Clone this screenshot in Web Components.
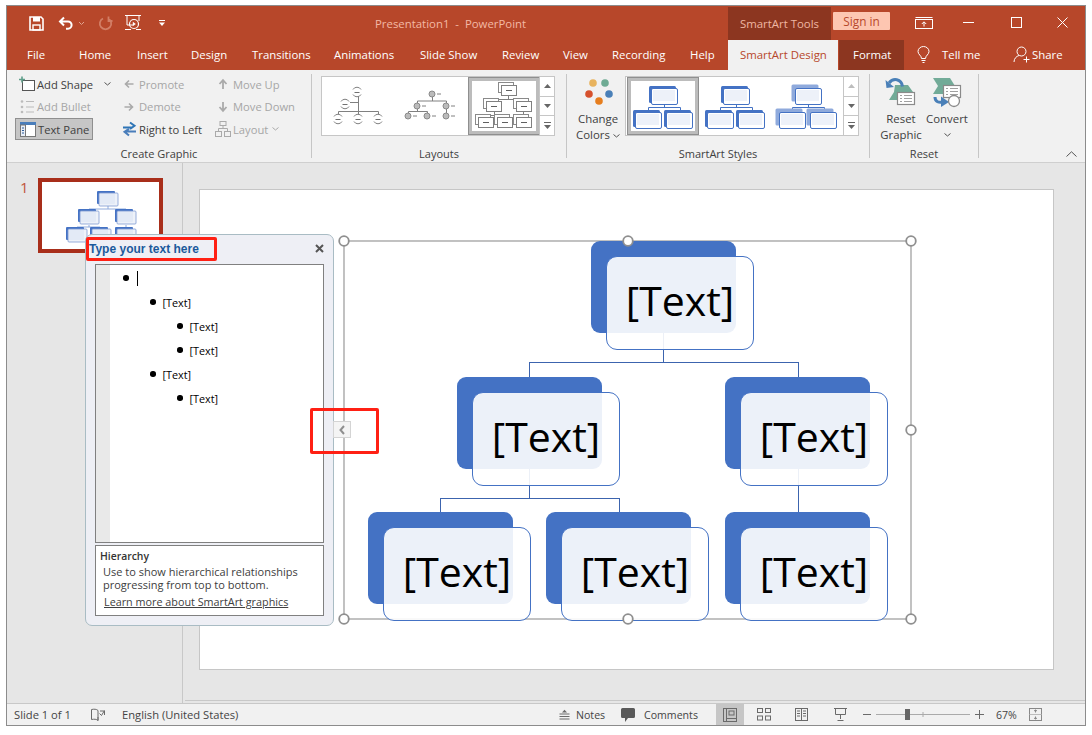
<!DOCTYPE html>
<html lang="en">
<head>
<meta charset="utf-8">
<title>PowerPoint SmartArt</title>
<style>
  html, body { margin: 0; background: #fff; }
  body { font-family: "Open Sans", "Liberation Sans", sans-serif; }
</style>
</head>
<body>
<ppt-window>
  <ppt-titlebar></ppt-titlebar>
  <ppt-tabs></ppt-tabs>
  <ppt-ribbon>
    <ribbon-group label="Create Graphic" w="305">
      <div style="display:flex;padding-left:8px;width:297px;box-sizing:border-box">
        <div style="width:102px">
          <rb-item icon="addShape" chev="1" w="96">Add Shape</rb-item>
          <rb-item icon="addBullet" disabled>Add Bullet</rb-item>
          <rb-item icon="textPane" active w="78">Text Pane</rb-item>
        </div>
        <div style="width:94px">
          <rb-item icon="promote" disabled>Promote</rb-item>
          <rb-item icon="demote" disabled>Demote</rb-item>
          <rb-item icon="rtl">Right to Left</rb-item>
        </div>
        <div>
          <rb-item icon="moveUp" disabled>Move Up</rb-item>
          <rb-item icon="moveDown" disabled>Move Down</rb-item>
          <rb-item icon="layout" disabled chev="1">Layout</rb-item>
        </div>
      </div>
    </ribbon-group>
    <ribbon-group label="Layouts" w="255" pad="9">
      <rb-gallery kind="layouts"></rb-gallery>
    </ribbon-group>
    <ribbon-group label="SmartArt Styles" w="303">
      <div style="display:flex">
        <rb-big icon="colors" w="54" left="4" chev="1">Change<br>Colors</rb-big>
        <rb-gallery kind="styles"></rb-gallery>
      </div>
    </ribbon-group>
    <ribbon-group label="Reset" w="109" pad="8">
      <div style="display:flex">
        <rb-big icon="reset" w="46">Reset<br>Graphic</rb-big>
        <rb-big icon="convert" w="46" chev="2">Convert</rb-big>
      </div>
    </ribbon-group>
    <ribbon-collapse></ribbon-collapse>
  </ppt-ribbon>
  <ppt-stage>
    <smart-node x="591" y="241">[Text]</smart-node>
    <smart-node x="457" y="377">[Text]</smart-node>
    <smart-node x="725" y="377">[Text]</smart-node>
    <smart-node x="368" y="512">[Text]</smart-node>
    <smart-node x="546" y="512">[Text]</smart-node>
    <smart-node x="725" y="512">[Text]</smart-node>
    <text-pane></text-pane>
  </ppt-stage>
  <ppt-statusbar></ppt-statusbar>
</ppt-window>

<script>
// shared ribbon text style
const UI_FONT = '"Open Sans", "Liberation Sans", sans-serif';
const svg = (w, h, body, css = '') =>
    `<svg width="${w}" height="${h}" viewBox="0 0 ${w} ${h}" overflow="visible" style="display:block;flex:none;${css}">${body}</svg>`;

// white doc with grey lines, used by reset and convert
const docLines = (x, y) => `<rect x="${x + .5}" y="${y + .5}" width="17" height="12" fill="#fff" stroke="#8a8a8a" stroke-width="1.2"/>
    <path d="M${x + 3} ${y + 3.5}h2M${x + 7} ${y + 3.5}h8M${x + 3} ${y + 6.5}h2M${x + 7} ${y + 6.5}h8M${x + 3} ${y + 9.5}h2M${x + 7} ${y + 9.5}h8" stroke="#a0a0a0"/>`;

const ICONS = {
    addShape: svg(16, 16, `<rect x="3.5" y="4.5" width="12" height="10" fill="#fff" stroke="#555"/><path d="M3 .5v6M0 3.5h6" stroke="#5E9E8A" stroke-width="1.6"/>`),
    addBullet: svg(16, 16, `<g fill="#bbb"><circle cx="3" cy="2.5" r="1.3"/><circle cx="3" cy="8" r="1.3"/><circle cx="3" cy="13" r="1.3"/></g><path d="M7 2.5h8M7 8h8M7 13h8" stroke="#bbb"/>`),
    textPane: svg(16, 15, `<rect x=".5" y=".5" width="15" height="14" fill="#fff" stroke="#777"/><rect x="0" y="0" width="16" height="3" fill="#4A7EBB"/><rect x=".5" y="3" width="5" height="11.5" fill="#E8EEF7" stroke="#777"/><path d="M2 6h2M2 8.5h2M2 11h2" stroke="#2F5C99"/>`),
    promote: svg(12, 12, `<path d="M10.5 6H3M6 2.5 2.5 6 6 9.5" fill="none" stroke="#aaa" stroke-width="1.6"/>`),
    demote: svg(12, 12, `<path d="M1.5 6H9M6 2.5 9.5 6 6 9.5" fill="none" stroke="#aaa" stroke-width="1.6"/>`),
    rtl: svg(15, 16, `<path d="M1 6.5h9.5M8 1.5l4.5 3.2L8 8" fill="none" stroke="#2E75B6" stroke-width="2"/><path d="M14 10.5H4M7 7.8l-4.5 3L7 14.5" fill="none" stroke="#4A7EBB" stroke-width="2"/>`),
    moveUp: svg(12, 12, `<path d="M6 11V3M2.5 6 6 2.2 9.5 6" fill="none" stroke="#aaa" stroke-width="1.8"/>`),
    moveDown: svg(12, 12, `<path d="M6 1v8M2.5 6 6 9.8 9.5 6" fill="none" stroke="#aaa" stroke-width="1.8"/>`),
    layout: svg(16, 16, `<g fill="none" stroke="#aaa"><rect x="5" y=".5" width="6" height="4"/><rect x=".5" y="10.5" width="6" height="5"/><rect x="9.5" y="10.5" width="6" height="5"/><path d="M8 4.5v3M3.5 10.5v-3h9v3"/></g>`),
    colors: svg(28, 28, `<circle cx="9" cy="5" r="3.8" fill="#E8B35E"/><circle cx="21" cy="5" r="3.8" fill="#6FAB94"/><circle cx="5" cy="16" r="3.8" fill="#D6512D"/><circle cx="25" cy="16" r="3.8" fill="#4A80B8"/><circle cx="15" cy="23" r="3.8" fill="#E67E1E"/>`),
    reset: svg(32, 31, `<g transform="translate(-885 -78)">
        <path d="M895 85h13l5 7-5 8h-19l5-8z" fill="#72AB98"/>
        ${docLines(897, 92)}
        <path d="M902.500 86.500C901.500 78.500 893 77.500 889 83" fill="none" stroke="#4A80B8" stroke-width="3"/>
        <path d="M885.500 80l1 8 7.500-1z" fill="#4A80B8"/>
    </g>`),
    convert: svg(32, 31, `<g transform="translate(-931 -78)">
        <path d="M933 78h17l5 8-5 8h-17l5-8z" fill="#72AB98"/>
        ${docLines(943, 85)}
        <path d="M935 97c0 5 4 6 8 5" fill="none" stroke="#4A80B8" stroke-width="3"/>
        <path d="M941 96.500l8 5.500-8 5z" fill="#4A80B8"/>
        <circle cx="954" cy="101" r="5.500" fill="#fff" stroke="#8a8a8a" stroke-width="1.300"/>
    </g>`)
};

// draws the two-layer node thumbnails of the galleries
function miniNode(x, y, w, h, back, line, inner, off = 2) {
    return `<rect x="${x - off}" y="${y - off}" width="${w}" height="${h}" rx="1.5" fill="${back}"/>
        <rect x="${x + .5}" y="${y + .5}" width="${w - 1}" height="${h - 1}" rx="1.5" fill="#fff" stroke="${line}" stroke-width="1"/>
        <rect x="${x + 2}" y="${y + 2}" width="${w - 5}" height="${h - 6}" fill="${inner}"/>`;
}
function layoutCircle(x, y) {
    return `<circle cx="${x}" cy="${y}" r="4.500" fill="#fff"/><path d="M${x - 4} ${y - 2.5}a4.500 4.200 0 0 1 8 0M${x - 4} ${y + 2.5}a4.500 4.200 0 0 0 8 0" fill="none" stroke="#808080"/><path d="M${x - 2.5} ${y + .5}h5" stroke="#707070"/>`;
}
function dot(x, y) {
    return `<circle cx="${x}" cy="${y}" r="3" fill="#bbb" stroke="#8a8a8a"/><path d="M${x + 5} ${y}h4" stroke="#808080"/>`;
}
function greyBox(x, y) {
    return `<rect x="${x - 2.5}" y="${y - 2.5}" width="15" height="10" fill="#fff" stroke="#8a8a8a"/><rect x="${x + .5}" y="${y + .5}" width="15" height="10" fill="#fff" stroke="#808080"/><path d="M${x + 5} ${y + 5.5}h6" stroke="#606060"/>`;
}

class PptWindow extends HTMLElement {
    constructor() {
        super();
        this.attachShadow({ mode: 'open' }).innerHTML = `
            <style>
                :host { display: flex; flex-direction: column; box-sizing: border-box; width: 1080px; height: 721px; margin: 5px 0 0 6px;
                        border: 1px solid #8c8c8c; background: #f1f1f1; font-family: ${UI_FONT}; overflow: hidden; }
            </style>
            <slot></slot>`;
    }
}

class PptTitlebar extends HTMLElement {
    constructor() {
        super();
        this.attachShadow({ mode: 'open' }).innerHTML = `
            <style>
                :host { display: flex; height: 34px; background: #b7472a; color: #fff; font-size: 11.4px; align-items: stretch; }
                .qat { width: 368px; display: flex; align-items: center; box-sizing: border-box; padding-left: 22px; }
                .title { width: 353px; display: flex; align-items: center; color: #f3b9a5; white-space: pre; }
                .tools { width: 103px; margin-top: 1px; background: #8c3620; color: #efb7a3; display: flex; align-items: center; justify-content: center; }
                .sign { width: 57px; height: 18px; margin: 6px 0 0 2px; background: #fdc6b1; color: #b7472a; display: flex; align-items: center; justify-content: center; font-size: 11.8px; border-radius: 1px; }
                .ctl { width: 46px; display: flex; align-items: center; justify-content: center; }
                .ctl svg { margin-top: -1px; }
            </style>
            <div class="qat">
                ${svg(15, 15, `<path d="M1 1h11l2 2v11H1z" fill="none" stroke="#fff" stroke-width="1.6"/><rect x="4" y="1" width="7" height="4.5" fill="#fff"/><rect x="4" y="9" width="7" height="5" fill="none" stroke="#fff" stroke-width="1.4"/>`)}
                ${svg(16, 14, `<path d="M2.500 5.500H10a3.600 3.600 0 0 1 0 7.200H8M6 1.500 2 5.500l4 4" fill="none" stroke="#fff" stroke-width="2"/>`, 'margin-left:14px')}
                ${svg(7, 5, `<path d="M1 1l2.500 2.500L6 1" fill="none" stroke="#e0a491"/>`, 'margin-left:4px')}
                ${svg(14, 14, `<path d="M4 2.500a5.700 5.700 0 1 0 5 0M9.500 .5v4.500h4" fill="none" stroke="#d27e66" stroke-width="1.800"/>`, 'margin-left:14px')}
                ${svg(18, 18, `<path d="M1 1.500h16M3 2v9h6M15 2v5M7 15.500H1M17 15.500h-5" fill="none" stroke="#fff"/><circle cx="10" cy="10" r="4.500" fill="none" stroke="#fff" stroke-width="1.200"/><path d="M8.800 7.800l3 2.200-3 2.200z" fill="#fff"/>`, 'margin-left:11px')}
                ${svg(6, 7, `<path d="M0 .5h6" stroke="#fff"/><path d="M0 2.500h6L3 6z" fill="#fff"/>`, 'margin-left:17px')}
            </div>
            <div class="title">Presentation1  -  PowerPoint</div>
            <div class="tools">SmartArt Tools</div>
            <div class="sign">Sign in</div>
            <div style="width:11px"></div>
            <div class="ctl">${svg(18, 12, `<rect x=".5" y="2.500" width="17" height="9" fill="none" stroke="#fff"/><path d="M.5 .5h17" stroke="#fff"/><path d="M9 9.500V5M6.800 7 9 4.800 11.200 7" fill="none" stroke="#fff"/>`)}</div>
            <div class="ctl" style="margin-left:-2px">${svg(11, 1, `<path d="M0 .5h11" stroke="#fff"/>`)}</div>
            <div class="ctl" style="margin-left:2px">${svg(11, 11, `<rect x=".5" y=".5" width="10" height="10" fill="none" stroke="#fff"/>`)}</div>
            <div class="ctl">${svg(11, 11, `<path d="M.5 .5l10 10M10.500 .5l-10 10" stroke="#fff"/>`)}</div>`;
    }
}

class PptTabs extends HTMLElement {
    constructor() {
        super();
        const tabs = [['File', 72, 20], ['Home', 58], ['Insert', 54], ['Design', 61], ['Transitions', 82], ['Animations', 86],
            ['Slide Show', 82], ['Review', 61], ['View', 49], ['Recording', 78], ['Help', 38]];
        const cell = ([t, w, p = 0], c = '') => `<div class="tab ${c}" style="width:${w}px;padding-left:${p}px"><span>${t}</span></div>`;
        this.attachShadow({ mode: 'open' }).innerHTML = `
            <style>
                :host { display: flex; height: 30px; background: #b7472a; color: #fff; font-size: 11.4px; }
                .tab { box-sizing: border-box; display: flex; align-items: center; white-space: nowrap; padding-bottom: 2px; }
                .on { background: #f1f1f1; color: #b7472a; }
                .ctx { background: #8c3620; margin-left: 1px; }
                .tell { display: flex; align-items: center; margin-left: 13px; width: 96px; padding-bottom: 2px; }
                .share { display: flex; align-items: center; padding-bottom: 2px; }
            </style>
            ${tabs.map(t => cell(t)).join('')}
            ${cell(['SmartArt Design', 110, 12], 'on')}
            ${cell(['Format', 65, 14], 'ctx')}
            <div class="tell">
                ${svg(13, 17, `<path d="M4.500 12.500C4.500 9.500 1 8.500 1 5.500a5.500 5 0 0 1 11 0c0 3-3.500 4-3.500 7zM4.500 14.500h4M5.500 16.500h2" fill="none" stroke="#fff"/>`)}
                <span style="margin-left:12px">Tell me</span>
            </div>
            <div class="share">
                ${svg(17, 17, `<circle cx="8.500" cy="5.500" r="4.500" fill="none" stroke="#fff"/><path d="M1 16c0-3.500 2.500-5.800 5-6.500M13.500 10.500v6M10.500 13.500h6" fill="none" stroke="#fff"/>`)}
                <span style="margin-left:2px">Share</span>
            </div>`;
    }
}

class PptRibbon extends HTMLElement {
    constructor() {
        super();
        this.attachShadow({ mode: 'open' }).innerHTML = `
            <style>
                :host { display: flex; height: 93px; box-sizing: border-box; background: #f1f1f1; border-bottom: 1px solid #cfcfcf; font-size: 11.2px; color: #404040; }
            </style>
            <slot></slot>`;
    }
}

class RibbonGroup extends HTMLElement {
    constructor() {
        super();
        const w = this.getAttribute('w');
        const pad = this.getAttribute('pad') || 0;
        this.attachShadow({ mode: 'open' }).innerHTML = `
            <style>
                :host { display: flex; flex: none; width: ${w}px; height: 92px; }
                .body { flex: 1; min-width: 0; display: flex; flex-direction: column; }
                .content { height: 74px; padding: 3px 0 0 ${pad}px; box-sizing: border-box; }
                .label { text-align: center; line-height: 16px; margin-top: 2px; font-size: 11px; color: #404040; }
                .sep { width: 1px; height: 84px; margin-top: 4px; background: #c6c6c6; }
            </style>
            <div class="body">
                <div class="content"><slot></slot></div>
                <div class="label">${this.getAttribute('label')}</div>
            </div>
            <div class="sep"></div>`;
    }
}

// small ribbon command, one row of a three-row column
class RbItem extends HTMLElement {
    constructor() {
        super();
        const off = this.hasAttribute('disabled');
        const active = this.hasAttribute('active');
        const w = this.getAttribute('w');
        const chev = this.getAttribute('chev');
        this.attachShadow({ mode: 'open' }).innerHTML = `
            <style>
                :host { display: block; height: 22.5px; color: ${off ? '#a6a6a6' : '#404040'}; }
                .row { display: flex; align-items: center; height: 22px; white-space: nowrap; box-sizing: border-box; ${w ? `width:${w}px;` : ''} padding-left: 3px; }
                .active { background: #c6c6c6; border: 1px solid #8f8f8f; }
                .ic { width: 18px; display: flex; align-items: center; justify-content: center; flex: none; margin-right: 1px; }
            </style>
            <div class="row ${active ? 'active' : ''}">
                <span class="ic">${ICONS[this.getAttribute('icon')]}</span>
                <span><slot></slot></span>
                ${chev ? svg(7, 4, `<path d="M.5 .5 3.500 3 6.500 .5" fill="none" stroke="${off ? '#aaa' : '#555'}"/>`, 'margin-left:' + (off ? '4px' : 'auto')) : ''}
            </div>`;
    }
}

class RbBig extends HTMLElement {
    constructor() {
        super();
        const chev = this.getAttribute('chev');
        const mark = svg(7, 4, `<path d="M.5 .5 3.500 3 6.500 .5" fill="none" stroke="#555"/>`);
        this.attachShadow({ mode: 'open' }).innerHTML = `
            <style>
                :host { display: block; width: ${this.getAttribute('w')}px; margin-left: ${this.getAttribute('left') || 0}px; flex: none; text-align: center; line-height: 16px; color: #404040; font-size: 11.4px; }
                .ic { display: flex; justify-content: center; height: 33px; padding-top: 5px; }
                .txt { display: inline-block; }
                .inl { display: inline-block; vertical-align: middle; margin-left: 3px; }
                .under { display: flex; justify-content: center; margin-top: 6px; }
            </style>
            <div class="ic">${ICONS[this.getAttribute('icon')]}</div>
            <div class="txt"><slot></slot>${chev === '1' ? `<span class="inl">${mark}</span>` : ''}</div>
            ${chev === '2' ? `<div class="under">${mark}</div>` : ''}`;
    }
}

class RbGallery extends HTMLElement {
    constructor() {
        super();
        const layouts = this.getAttribute('kind') === 'layouts';
        const first = svg(74, 56, `<g transform="translate(-322 -78)">
                <path d="M358.500 96v19M338.500 114.500v-3h40v3M350 102.500h8.500" fill="none" stroke="#808080"/>
                ${[[357, 92], [345, 104], [338, 119], [358, 119], [378, 119]].map(p => layoutCircle(...p)).join('')}
            </g>`);
        const second = svg(72, 56, `<g transform="translate(-396 -78)">
                <path d="M432.500 97v4M417.500 103v-2h29v2M417.500 109v2.500M408.500 113v-1.500h19v1.500M446.500 109v4" fill="none" stroke="#808080"/>
                ${dot(432, 94)}${dot(417, 106)}${dot(446, 106)}${dot(408, 116)}${dot(427, 116)}${dot(446, 116)}
            </g>`);
        const third = svg(64, 48, `<g transform="translate(-472 -82)">
                <path d="M508.500 95v4.500M494.500 99.500h29M494.500 99v2M523.500 99v2M494.500 111v4.500M485.500 115.500h20M485.500 115v2M505.500 115v2M523.500 111v6" fill="none" stroke="#808080"/>
                ${greyBox(501, 85)}${greyBox(486, 101)}${greyBox(516, 101)}${greyBox(478, 117)}${greyBox(497, 117)}${greyBox(516, 117)}
            </g>`);
        // style thumbnails: same tree in three looks
        const tree = (ox, back, line, off) => {
            const b = [[ox + 24, 88], [ox + 8, 112], [ox + 39, 112]];
            return `<path d="M${ox + 37.5} 104v3M${ox + 21.5} 111v-3.500h32v3.500" fill="none" stroke="${line}"/>` +
                b.map(([x, y]) => miniNode(x, y, 27, 17, back, line, '#edf1f9', off)).join('');
        };
        const sA = svg(64, 48, `<g transform="translate(-631 -82)">${tree(627, '#4472c4', '#4472c4')}</g>`);
        const sB = svg(72, 56, `<g transform="translate(-699 -78)">${tree(699, '#4472c4', '#4472c4')}</g>`);
        const sC = svg(72, 56, `<g transform="translate(-771 -78)">${tree(771, '#8faadc', '#4472c4', 3.5)}</g>`);
        const arrow = (d, c) => `<path d="${d}" fill="${c}"/>`;
        const scroll = (dim) => `
            <div class="scroll">
                <div>${svg(7, 4, arrow('M3.500 0 7 4H0z', dim ? '#bdbdbd' : '#666'))}</div>
                <div>${svg(7, 4, arrow('M0 0h7L3.500 4z', '#666'))}</div>
                <div>${svg(7, 7, `<path d="M0 .5h7" stroke="#666"/>` + arrow('M0 3h7L3.500 7z', '#666'))}</div>
            </div>`;
        this.attachShadow({ mode: 'open' }).innerHTML = `
            <style>
                :host { display: flex; flex: none; width: 234px; height: 60px; margin-top: 3px; box-sizing: border-box; background: #fff; border: 1px solid #c6c6c6; }
                .cell { width: 72px; height: 58px; box-sizing: border-box; display: flex; align-items: center; justify-content: center; flex: none; }
                .sel { border: 4px solid #bcbcbc; outline: 1px solid #8f8f8f; outline-offset: -1px; }
                .items { flex: 1; display: flex; padding: 0 0 0 ${layouts ? 0 : 1}px; overflow: hidden; }
                .scroll { width: 14px; flex: none; border-left: 1px solid #c6c6c6; display: flex; flex-direction: column; }
                .scroll div { flex: 1; display: flex; align-items: center; justify-content: center; border-bottom: 1px solid #c6c6c6; }
                .scroll div:last-child { border-bottom: 0; }
            </style>
            <div class="items">
                ${layouts
                    ? `<div class="cell" style="width:74px">${first}</div><div class="cell">${second}</div><div class="cell sel">${third}</div>`
                    : `<div class="cell sel">${sA}</div><div class="cell">${sB}</div><div class="cell">${sC}</div>`}
            </div>
            ${scroll(!layouts)}`;
    }
}

class RibbonCollapse extends HTMLElement {
    constructor() {
        super();
        this.attachShadow({ mode: 'open' }).innerHTML = `
            <style>:host { flex: 1; display: flex; justify-content: flex-end; align-items: flex-end; padding: 0 8px 5px 0; }</style>
            ${svg(11, 6, `<path d="M.5 5.500 5.500 .8l5 4.700" fill="none" stroke="#555"/>`)}`;
    }
}

// workspace: thumbnail pane on the left, slide canvas on the right
class PptStage extends HTMLElement {
    constructor() {
        super();
        const handles = [[344, 241], [628, 241], [911, 241], [911, 430], [911, 619], [628, 619], [344, 619]];
        const thumbNodes = [[97, 191], [78, 209], [115, 209], [66, 227], [90, 227], [115, 227]];
        this.attachShadow({ mode: 'open' }).innerHTML = `
            <style>
                :host { display: flex; position: relative; height: 540px; background: #e6e6e6; flex: none; }
                .thumbs { width: 176px; flex: none; border-right: 1px solid #c8c8c8; box-sizing: border-box; display: flex; padding: 15px 0 0 13px; }
                .num { width: 18px; color: #c0553c; font-size: 15px; line-height: 18px; }
                .thumb { width: 125px; height: 75px; box-sizing: border-box; border: 4px solid #a82e1a; background: #fff; flex: none; }
                .main { flex: 1; display: flex; flex-direction: column; }
                .slideArea { flex: 1; padding: 26px 0 0 16px; }
                .slide { width: 855px; height: 481px; box-sizing: border-box; background: #fff; border: 1px solid #c6c6c6; }
                .hbar { height: 2px; margin-left: 2px; border-top: 1px solid #c8c8c8; }
                .overlay { position: absolute; left: 0; top: 0; pointer-events: none; }
                .mark { position: absolute; box-sizing: border-box; border: 3px solid #ff2014; border-radius: 2px; z-index: 6; }
                .chev { position: absolute; left: 326px; top: 258px; width: 18px; height: 17px; box-sizing: border-box; background: #f4f4f4; border: 1px solid #d4d4d4; display: flex; align-items: center; justify-content: center; z-index: 5; }
            </style>
            <div class="thumbs">
                <div class="num">1</div>
                <div class="thumb">
                    ${svg(117, 67, `<g transform="translate(-42 -182)">
                        <path d="M108 206v3M89 212v-3h37v3M89 225v2M77 229v-2h23v2M126 225v2" fill="none" stroke="#8faadc"/>
                        ${thumbNodes.map(([x, y]) => `<rect x="${x}" y="${y}" width="18" height="13" rx="1" fill="#4472c4"/><rect x="${x + 2}" y="${y + 2}" width="19" height="13" rx="1" fill="#edf1f9" fill-opacity=".94" stroke="#7d9ad2" stroke-width=".8"/>`).join('')}
                    </g>`)}
                </div>
            </div>
            <div class="main">
                <div class="slideArea"><div class="slide"></div></div>
                <div class="hbar"></div>
            </div>
            <svg class="overlay" width="1078" height="540" viewBox="7 163 1078 540">
                <path d="M663.500 333v29M529.500 362.500h269M529.500 362v15M798.500 362v15M529.500 469v29M440.500 498.500h179M440.500 498v14M619.500 498v14M798.500 469v43" fill="none" stroke="#3c64ae" stroke-width="1"/>
                <rect x="344" y="241" width="567" height="378" fill="none" stroke="#999" stroke-width="1.200"/>
            </svg>
            <slot></slot>
            <svg class="overlay" style="z-index:3" width="1078" height="540" viewBox="7 163 1078 540">
                ${handles.map(([x, y]) => `<circle cx="${x}" cy="${y}" r="4.800" fill="#fff" stroke="#8f8f8f" stroke-width="1.800"/>`).join('')}
            </svg>
            <div class="mark" style="left:303px;top:245px;width:69px;height:46px"></div>
            <div class="chev">${svg(6, 10, `<path d="M5 1 1.500 5 5 9" fill="none" stroke="#8f8f8f" stroke-width="2"/>`)}</div>
            <div class="mark" style="left:79px;top:74px;width:131px;height:24px"></div>`;
    }
}

class SmartNode extends HTMLElement {
    constructor() {
        super();
        const x = this.getAttribute('x') - 7;
        const y = this.getAttribute('y') - 163;
        this.attachShadow({ mode: 'open' }).innerHTML = `
            <style>
                :host { position: absolute; left: ${x}px; top: ${y}px; width: 163px; height: 109px; z-index: 2; }
                .back { position: absolute; left: 0; top: 0; width: 145px; height: 92px; border-radius: 9px; background: #4472c4; }
                .front { position: absolute; left: 15px; top: 15px; width: 148px; height: 94px; box-sizing: border-box; border-radius: 11px; border: 1px solid #4472c4;
                         background: rgba(255, 255, 255, .9); display: flex; align-items: center; justify-content: center;
                         font-size: 41px; line-height: 50px; color: #000; padding-bottom: 7px; }
            </style>
            <div class="back"></div>
            <div class="front"><slot></slot></div>`;
    }
}

class TextPane extends HTMLElement {
    constructor() {
        super();
        const rows = [[1, ''], [2, '[Text]'], [3, '[Text]'], [3, '[Text]'], [2, '[Text]'], [3, '[Text]']];
        this.attachShadow({ mode: 'open' }).innerHTML = `
            <style>
                :host { position: absolute; left: 78px; top: 71px; width: 249px; height: 392px; box-sizing: border-box; z-index: 4; background: #eeeff5;
                        border: 1px solid #a9bcc4; border-radius: 7px; display: flex; flex-direction: column; padding: 0 9px 9px 9px; }
                .head { height: 29px; box-sizing: border-box; padding-bottom: 2px; display: flex; align-items: center; justify-content: space-between; margin-left: -6px; flex: none; }
                .head b { font: bold 12px "Liberation Sans", sans-serif; color: #1c5a9c; }
                .list { height: 279px; box-sizing: border-box; border: 1px solid #808080; background: #fff; display: flex; flex: none; }
                .gutter { width: 14px; background: #e9e9e9; flex: none; }
                .rows { padding-top: 1px; }
                .r { height: 24px; display: flex; align-items: center; font-size: 10.8px; color: #000; }
                .r i { width: 5.5px; height: 5.5px; border-radius: 50%; background: #000; margin-right: 7px; flex: none; }
                .r:first-child i { margin-right: 8px; }
                .caret { width: 1px; height: 15px; background: #000; }
                .desc { height: 71px; margin-top: 2px; box-sizing: border-box; border: 1px solid #808080; background: #fff; padding: 4px 4px 0 4px; font-size: 11px; color: #404040; flex: none; }
                .desc b { display: block; font-weight: 600; font-size: 10.4px; line-height: 13px; color: #333; }
                .desc p { margin: 2px 0 0 3px; line-height: 13px; }
                .desc a { display: block; margin: 4px 0 0 4px; line-height: 14px; font-size: 10.8px; color: #404040; text-decoration: underline; }
            </style>
            <div class="head"><b>Type your text here</b>
                ${svg(9, 9, `<path d="M1 1l7 7M8 1 1 8" stroke="#555" stroke-width="2"/>`)}
            </div>
            <div class="list">
                <div class="gutter"></div>
                <div class="rows">
                    ${rows.map(([l, t]) => `<div class="r" style="padding-left:${l * 27 - 14}px"><i></i>${t ? `<span>${t}</span>` : '<span class="caret"></span>'}</div>`).join('')}
                </div>
            </div>
            <div class="desc">
                <b>Hierarchy</b>
                <p>Use to show hierarchical relationships<br>progressing from top to bottom.</p>
                <a>Learn more about SmartArt graphics</a>
            </div>`;
    }
}

class PptStatusbar extends HTMLElement {
    constructor() {
        super();
        const g = '#6a6a6a';
        this.attachShadow({ mode: 'open' }).innerHTML = `
            <style>
                :host { display: flex; align-items: center; height: 22px; box-sizing: border-box; border-top: 1px solid #c8c8c8; background: #f1f1f1; font-size: 10.6px; color: #444; flex: none; }
                span { white-space: nowrap; }
                .big { font-size: 11.2px; }
                .view { height: 21px; width: 28px; display: flex; align-items: center; justify-content: center; flex: none; }
                .pos { display: flex; align-items: center; flex: none; }
                .on { background: #c6c6c6; }
            </style>
            <span class="big" style="margin-left:7px;width:77px">Slide 1 of 1</span>
            ${svg(14, 13, `<path d="M7 2.500C5.500 1 3 1 .5 1.500v10c2.500-.5 5-.5 6.500 1V2.500zM7 12.500V9M9 3h4.500v4" fill="none" stroke="${g}"/><path d="M8.500 5.500l2 2 3-5" fill="none" stroke="${g}"/>`)}
            <span class="big" style="margin-left:17px;width:437px">English (United States)</span>
            ${svg(11, 11, `<path d="M.5 5h10M.5 7.500h10M.5 10h10" stroke="${g}"/><path d="M3 3.500 5.500 .8 8 3.500z" fill="${g}"/>`)}
            <span style="margin-left:6px;width:45px">Notes</span>
            ${svg(14, 14, `<path d="M1.500 0h11A1.500 1.500 0 0 1 14 1.500v7A1.500 1.500 0 0 1 12.500 10H7l-3 4v-4H1.500A1.500 1.500 0 0 1 0 8.500v-7A1.500 1.500 0 0 1 1.500 0z" fill="#595959"/>`)}
            <span style="margin-left:9px;width:72px">Comments</span>
            <div class="view on">${svg(14, 14, `<rect x=".5" y=".5" width="13" height="13" fill="none" stroke="${g}"/><path d="M3.500 .5v13M3.500 10.500h10" stroke="${g}"/><rect x="6" y="3" width="5" height="4" fill="none" stroke="${g}"/>`)}</div>
            <div class="view" style="margin-left:6px">${svg(14, 13, `<g fill="none" stroke="${g}"><rect x=".5" y=".5" width="5" height="4"/><rect x="8.500" y=".5" width="5" height="4"/><rect x=".5" y="8" width="5" height="4"/><rect x="8.500" y="8" width="5" height="4"/></g>`)}</div>
            <div class="view" style="margin-left:9px">${svg(13, 13, `<rect x=".5" y=".5" width="12" height="12" fill="none" stroke="${g}"/><path d="M6.500 .5v12M2 3h3M2 5.500h3M2 8h3M8 3h3M8 5.500h3M8 8h3" stroke="${g}"/>`)}</div>
            <div class="view" style="margin-left:11px">${svg(13, 13, `<path d="M0 .5h13M1.500 1v5.500h10V1M6.500 6.500V11M3.500 12.500h6" fill="none" stroke="${g}"/>`)}</div>
            <div class="pos" style="margin-left:9px">${svg(8, 3, `<path d="M0 1.500h8" stroke="${g}"/>`)}</div>
            <div class="pos" style="margin-left:5px;width:94px;height:11px">
                ${svg(94, 11, `<path d="M0 5.500h94" stroke="#aaa"/><path d="M47 3v5" stroke="#aaa"/><rect x="29" y="0" width="5" height="11" fill="#666"/>`)}
            </div>
            <div class="pos" style="margin-left:5px">${svg(9, 9, `<path d="M0 4.500h9M4.500 0v9" stroke="${g}"/>`)}</div>
            <span style="margin-left:12px;width:33px">67%</span>
            ${svg(13, 13, `<rect x=".5" y=".5" width="12" height="12" fill="none" stroke="#888"/><path d="M6.500 2v2.500M5 3l1.500-1L8 3M6.500 11V8.500M5 10l1.500 1L8 10" fill="none" stroke="#888"/><path d="M.5 6.500h12" stroke="#bbb"/>`)}`;
    }
}

customElements.define('ppt-window', PptWindow);
customElements.define('ppt-titlebar', PptTitlebar);
customElements.define('ppt-tabs', PptTabs);
customElements.define('ppt-ribbon', PptRibbon);
customElements.define('ribbon-group', RibbonGroup);
customElements.define('rb-item', RbItem);
customElements.define('rb-big', RbBig);
customElements.define('rb-gallery', RbGallery);
customElements.define('ribbon-collapse', RibbonCollapse);
customElements.define('ppt-stage', PptStage);
customElements.define('smart-node', SmartNode);
customElements.define('text-pane', TextPane);
customElements.define('ppt-statusbar', PptStatusbar);
</script>
</body>
</html>
